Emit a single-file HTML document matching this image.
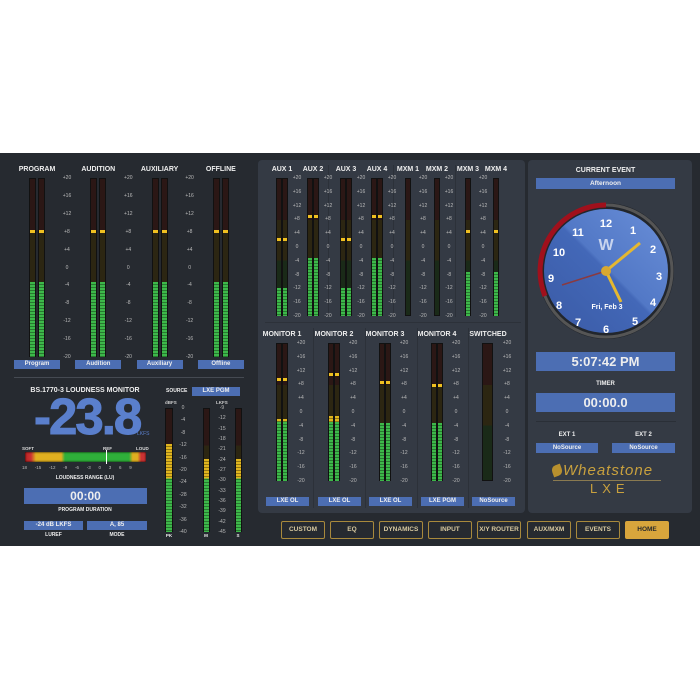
<!DOCTYPE html>
<html><head><meta charset="utf-8"><style>
*{margin:0;padding:0;box-sizing:border-box}
body{width:700px;height:700px;background:#fff;position:relative;overflow:hidden;font-family:"Liberation Sans",sans-serif;font-weight:bold;color:#e8e8e8}
.a{position:absolute}
#ui{position:absolute;left:0;top:153px;width:700px;height:393px;background:#262a30}
.lbl{position:absolute;font-size:7px;text-align:center;white-space:nowrap;color:#eee}
.sc{position:absolute;font-size:5px;color:#bbb;font-weight:normal;text-align:center;width:16px}
.box{position:absolute;background:#4c6eb3;color:#eee;font-size:6px;text-align:center;white-space:nowrap}
.btn{position:absolute;top:521px;width:44px;height:18px;border:1.5px solid #a8893c;border-radius:2px;font-size:6.5px;color:#d8c9a0;text-align:center;line-height:15px;font-weight:bold}
</style></head><body>
<div id="ui"></div>
<div class="a" style="left:258px;top:160px;width:267px;height:353px;background:#343a44;border-radius:4px"></div>
<div class="a" style="left:528px;top:160px;width:164px;height:353px;background:#343a44;border-radius:4px"></div>
<div class="a" style="left:14px;top:377px;width:230px;height:1px;background:#454a52"></div>
<div class="a" style="left:265px;top:322px;width:256px;height:1px;background:#2c3139"></div>
<div class="a" style="left:328px;top:165px;width:1px;height:152px;background:#2c3139"></div>
<div class="a" style="left:393px;top:165px;width:1px;height:152px;background:#2c3139"></div>
<div class="a" style="left:455px;top:165px;width:1px;height:152px;background:#2c3139"></div>
<div class="a" style="left:313px;top:328px;width:1px;height:180px;background:#2c3139"></div>
<div class="a" style="left:365px;top:328px;width:1px;height:180px;background:#2c3139"></div>
<div class="a" style="left:417px;top:328px;width:1px;height:180px;background:#2c3139"></div>
<div class="a" style="left:468px;top:328px;width:1px;height:180px;background:#2c3139"></div>
<div class="a" style="left:536px;top:421px;width:140px;height:1px;background:#2a2f37"></div>
<div id="m"></div>

<!-- loudness -->
<div class="lbl" style="left:24px;top:387px;width:122px">BS.1770-3 LOUDNESS MONITOR</div>
<div class="a" style="left:34px;top:391px;font-size:51px;color:#5a7fcc;letter-spacing:-2px;line-height:52px;-webkit-text-stroke:1px #5a7fcc">-23.8</div>
<div class="a" style="left:137px;top:431px;font-size:5px;color:#5a7fcc;font-weight:normal">LKFS</div>
<div class="a" style="left:22px;top:446px;font-size:4.5px;color:#ddd">SOFT</div>
<div class="a" style="left:103px;top:446px;font-size:4.5px;color:#ddd">REF</div>
<div class="a" style="left:136px;top:446px;font-size:4.5px;color:#ddd">LOUD</div>
<div class="a" style="left:25px;top:452px;width:121px;height:10px;background:linear-gradient(90deg,#b22 0,#c33 5%,#e0b020 9%,#e0b020 30%,#2fb03a 33%,#2fb03a 86%,#e0b020 89%,#e0b020 93%,#c33 96%);box-shadow:inset 0 0 2px #000"></div>
<div class="a" style="left:106px;top:450px;width:1px;height:14px;background:#fff"></div>
<div class="a" style="left:22px;top:465px;width:128px;font-size:4.5px;color:#bbb;font-weight:normal;word-spacing:6.5px;white-space:nowrap">18 -15 -12 -9 -6 -3 0 3 6 9</div>
<div class="lbl" style="left:24px;top:475px;width:122px;font-size:5px">LOUDNESS RANGE (LU)</div>
<div class="box" style="left:24px;top:488px;width:123px;height:16px;font-size:12px;line-height:16px">00:00</div>
<div class="lbl" style="left:24px;top:507px;width:122px;font-size:5px">PROGRAM DURATION</div>
<div class="box" style="left:24px;top:521px;width:59px;height:9px;line-height:9px">-24 dB LKFS</div>
<div class="box" style="left:87px;top:521px;width:60px;height:9px;line-height:9px">A, 85</div>
<div class="lbl" style="left:24px;top:532px;width:59px;font-size:5px">LUREF</div>
<div class="lbl" style="left:87px;top:532px;width:60px;font-size:5px">MODE</div>
<div class="lbl" style="left:166px;top:388px;font-size:5px">SOURCE</div>
<div class="box" style="left:192px;top:387px;width:48px;height:9px;line-height:9px">LXE PGM</div>
<div class="a" style="left:165px;top:400px;font-size:4.5px;color:#ccc">dBFS</div>
<div class="a" style="left:216px;top:400px;font-size:4.5px;color:#ccc">LKFS</div>
<div class="lbl" style="left:163px;top:533px;width:12px;font-size:4.5px">PK</div>
<div class="lbl" style="left:200px;top:533px;width:12px;font-size:4.5px">M</div>
<div class="lbl" style="left:232px;top:533px;width:12px;font-size:4.5px">S</div>

<!-- right -->
<div class="lbl" style="left:536px;top:167px;width:139px">CURRENT EVENT</div>
<div class="box" style="left:536px;top:178px;width:139px;height:11px;line-height:11px;font-size:6.5px">Afternoon</div>
<svg class="a" style="left:536px;top:201px" width="140" height="140" viewBox="0 0 140 140">
<defs><linearGradient id="g" x1="0" y1="1" x2="1" y2="0"><stop offset="0" stop-color="#3a5aa5"/><stop offset=".5" stop-color="#4368b8"/><stop offset=".52" stop-color="#5278c6"/><stop offset="1" stop-color="#6a8fd8"/></linearGradient></defs>
<circle cx="70" cy="70" r="68" fill="#22262c"/>
<circle cx="70" cy="70" r="66" fill="none" stroke="#555" stroke-width="3"/>
<path d="M70 4 A66 66 0 0 0 9 95" fill="none" stroke="#a0101c" stroke-width="5"/>
<circle cx="70" cy="70" r="62" fill="url(#g)"/>
<g fill="#fff" font-size="11" font-family="Liberation Sans" font-weight="bold" text-anchor="middle">
<text x="70" y="26">12</text><text x="97" y="33">1</text><text x="117" y="52">2</text><text x="123" y="79">3</text><text x="117" y="105">4</text><text x="99" y="124">5</text><text x="70" y="132">6</text><text x="42" y="125">7</text><text x="23" y="108">8</text><text x="15" y="81">9</text><text x="23" y="55">10</text><text x="42" y="35">11</text>
<text x="71" y="108" font-size="7">Fri, Feb 3</text>
<text x="70" y="49" font-size="16" fill="#c8d4ee">W</text></g>
<line x1="70" y1="70" x2="26" y2="84" stroke="#8a3a40" stroke-width="1.5"/>
<line x1="70" y1="70" x2="104" y2="42" stroke="#e5b830" stroke-width="3"/>
<line x1="70" y1="70" x2="85" y2="101" stroke="#e5b830" stroke-width="3"/>
<circle cx="70" cy="70" r="5" fill="#d8a830"/>
</svg>
<div class="box" style="left:536px;top:352px;width:139px;height:19px;line-height:19px;font-size:13px">5:07:42 PM</div>
<div class="lbl" style="left:536px;top:381px;width:139px;font-size:6px">TIMER</div>
<div class="box" style="left:536px;top:393px;width:139px;height:19px;line-height:19px;font-size:13px">00:00.0</div>
<div class="lbl" style="left:536px;top:432px;width:62px;font-size:6px">EXT 1</div>
<div class="lbl" style="left:612px;top:432px;width:63px;font-size:6px">EXT 2</div>
<div class="box" style="left:536px;top:443px;width:62px;height:10px;line-height:10px">NoSource</div>
<div class="box" style="left:612px;top:443px;width:63px;height:10px;line-height:10px">NoSource</div>
<div class="a" style="left:552px;top:465px;width:10px;height:11px;background:#b8902e;border-radius:50% 0 50% 0;transform:rotate(-20deg)"></div>
<div class="a" style="left:563px;top:462px;font-size:15px;color:#c9a13e;font-style:italic;font-weight:normal;letter-spacing:1px">Wheatstone</div>
<div class="a" style="left:553px;top:480px;width:108px;height:1px;background:#8a7a50"></div>
<div class="a" style="left:590px;top:481px;font-size:13px;color:#c9a13e;font-weight:normal;letter-spacing:5px">LXE</div>

<div class="btn" style="left:281px">CUSTOM</div>
<div class="btn" style="left:330px">EQ</div>
<div class="btn" style="left:379px">DYNAMICS</div>
<div class="btn" style="left:428px">INPUT</div>
<div class="btn" style="left:477px">X/Y ROUTER</div>
<div class="btn" style="left:527px">AUX/MXM</div>
<div class="btn" style="left:576px">EVENTS</div>
<div class="btn" style="left:625px;background:#d8a53c;color:#2a2a2a;border-color:#d8a53c">HOME</div>

<script>
var m=document.getElementById('m'),h='';
function bar(x,t,b,w,lvl,pk,yl){
 var H=b-t;
 h+='<div class="a" style="left:'+x+'px;top:'+t+'px;width:'+w+'px;height:'+H+'px;background:linear-gradient(#2b1715 0,#2b1715 30%,#2c2612 30%,#2c2612 60%,#1a2a18 60%);border:1px solid #111"></div>';
 if(lvl>0){var lh=Math.round(H*lvl);
  var bg=yl&&lvl>yl?'linear-gradient(#e0b51e 0,#e0b51e '+Math.round((1-yl/lvl)*100)+'%,#3db84a '+Math.round((1-yl/lvl)*100)+'%)':'#3db84a';
  h+='<div class="a" style="left:'+(x+1)+'px;top:'+(b-lh)+'px;width:'+(w-2)+'px;height:'+lh+'px;background:'+bg+'"></div>';
  h+='<div class="a" style="left:'+(x+1)+'px;top:'+(b-lh)+'px;width:'+(w-2)+'px;height:'+lh+'px;background:repeating-linear-gradient(transparent 0,transparent 2px,rgba(0,0,0,.35) 2px,rgba(0,0,0,.35) 3px)"></div>';}
 if(pk>0)h+='<div class="a" style="left:'+(x+1)+'px;top:'+Math.round(b-H*pk-2)+'px;width:'+(w-2)+'px;height:3px;background:#f0c020"></div>';
}
function scale(x,t,b,labs){var n=labs.length;for(var i=0;i<n;i++){var y=t+(b-t)*i/(n-1);h+='<div class="sc" style="left:'+(x-8)+'px;top:'+(y-3)+'px">'+labs[i]+'</div>';}}
function lab(x,y,txt,w){h+='<div class="lbl" style="left:'+(x-w/2)+'px;top:'+y+'px;width:'+w+'px">'+txt+'</div>';}
function box(x,y,w,txt){h+='<div class="box" style="left:'+x+'px;top:'+y+'px;width:'+w+'px;height:9px;line-height:9px">'+txt+'</div>';}
var L=['+20','+16','+12','+8','+4','0','-4','-8','-12','-16','-20'];
var names=['PROGRAM','AUDITION','AUXILIARY','OFFLINE'];
for(var i=0;i<4;i++){var x=29+i*61.3;
 bar(x,178,357,7,.42,.7);bar(x+9,178,357,7,.42,.7);
 lab(x+8,166,names[i],50);
 if(i<3)scale(x+38,178,357,L);
 box(x-15,360,46,names[i].charAt(0)+names[i].slice(1).toLowerCase());}
var ax=[{x:276,n:'AUX 1',l:.2,p:.55},{x:307,n:'AUX 2',l:.42,p:.72},{x:340,n:'AUX 3',l:.2,p:.55},{x:371,n:'AUX 4',l:.42,p:.72}];
ax.forEach(function(a){bar(a.x,178,316,6,a.l,a.p);bar(a.x+6,178,316,6,a.l,a.p);lab(a.x+6,166,a.n,26);scale(a.x+21,178,316,L);});
var mx=[{x:405,n:'MXM 1',l:0,p:0},{x:434,n:'MXM 2',l:0,p:0},{x:465,n:'MXM 3',l:.32,p:.61},{x:493,n:'MXM 4',l:.32,p:.61}];
mx.forEach(function(a){bar(a.x,178,316,6,a.l,a.p);lab(a.x+3,166,a.n,26);if(a.x!=434&&a.x!=493)scale(a.x+18,178,316,L);});
scale(449,178,316,L);
var mo=[{x:276,n:'MONITOR 1',l:.45,p:.73,t:'LXE OL'},{x:328,n:'MONITOR 2',l:.47,p:.77,t:'LXE OL'},{x:379,n:'MONITOR 3',l:.42,p:.71,t:'LXE OL'},{x:431,n:'MONITOR 4',l:.42,p:.69,t:'LXE PGM'},{x:482,n:'SWITCHED',l:0,p:0,t:'NoSource'}];
mo.forEach(function(a,i){
 if(i<4){bar(a.x,343,481,6,a.l,a.p,.43);bar(a.x+6,343,481,6,a.l,a.p,.43);}else{bar(a.x,343,481,11,0,0);}
 lab(a.x+6,331,a.n,46);scale(a.x+25,343,481,L);box(a.x-10,497,43,a.t);});
bar(165,408,532,8,.71,0,.43);
scale(183,408,532,['0','-4','-8','-12','-16','-20','-24','-28','-32','-36','-40']);
bar(203,408,532,7,.59,0,.43);bar(235,408,532,7,.59,0,.43);
scale(222,408,532,['-9','-12','-15','-18','-21','-24','-27','-30','-33','-36','-39','-42','-45']);
m.innerHTML=h;
</script>
</body></html>
